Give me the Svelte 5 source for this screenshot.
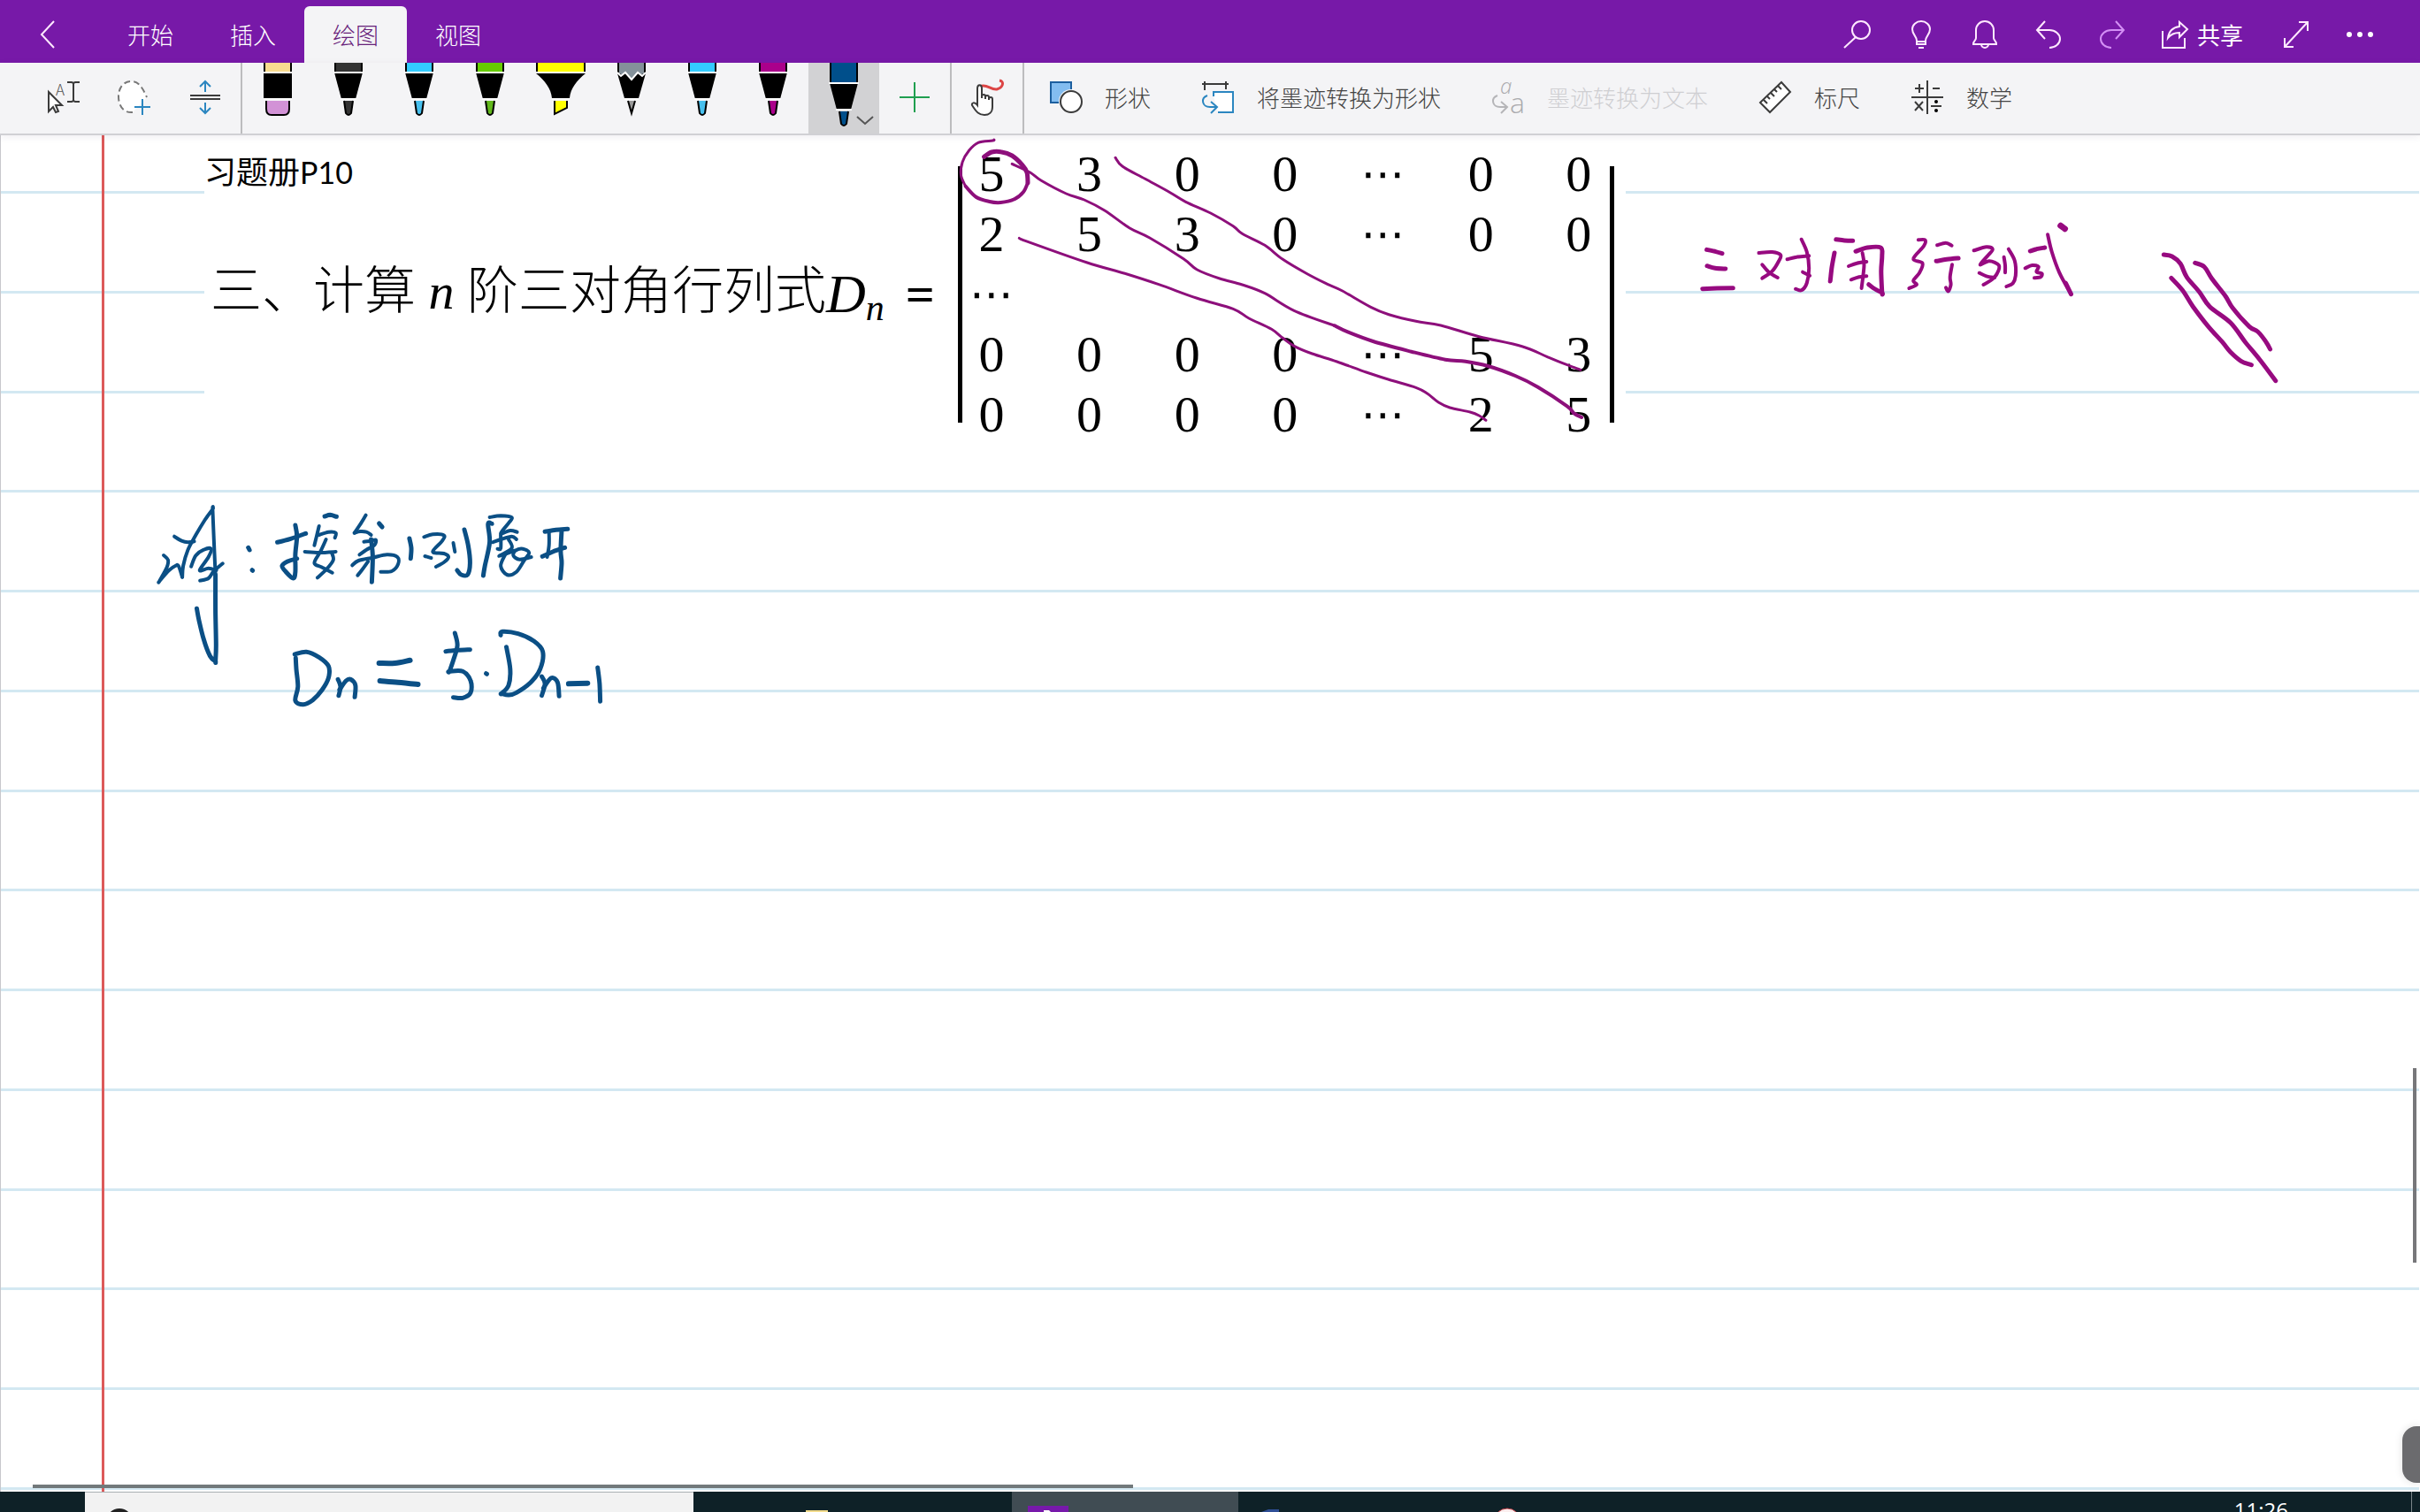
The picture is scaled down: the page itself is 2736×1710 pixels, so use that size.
<script>
  let activeTab = "绘图";
  let activePen = 8;

  const tabs = ["开始", "插入", "绘图", "视图"];

  const pens = [
    { name: "橡皮擦", type: "eraser", barrel: "#f8dc90", tip: "#d292d6" },
    { name: "黑色笔", type: "pen", barrel: "#333333", tip: "#333333" },
    { name: "浅蓝色笔", type: "pen", barrel: "#33ccff", tip: "#47c0ee" },
    { name: "绿色笔", type: "pen", barrel: "#66cc00", tip: "#62b81c" },
    { name: "黄色荧光笔", type: "marker", barrel: "#ffff00", tip: "#ffff00" },
    { name: "铅笔", type: "pencil", barrel: "#84919a", tip: "#999999" },
    { name: "天蓝色笔", type: "pen", barrel: "#33ccff", tip: "#47c0ee" },
    { name: "紫红色笔", type: "pen", barrel: "#ab008b", tip: "#ab008b" },
    { name: "深蓝色笔", type: "pen", barrel: "#004f8b", tip: "#004f8b" },
  ];

  const rows = [
    ["5", "3", "0", "0", "⋯", "0", "0"],
    ["2", "5", "3", "0", "⋯", "0", "0"],
    ["⋯", "", "", "", "", "", ""],
    ["0", "0", "0", "0", "⋯", "5", "3"],
    ["0", "0", "0", "0", "⋯", "2", "5"],
  ];

  // Ruled paper: evenly spaced lines, rounded to whole pixels
  const rules = Array.from({ length: 14 }, (_, i) => Math.round(63 + i * 112.77));

  // Each ink group has its own origin, scale and nib; strokes are [width, points]
  const inks = [
    {
      color: "#8d0f7b",
      nib: 0,
      x: 1060, y: -13, sx: 1 / 1.96, sy: 1 / 3,
      strokes: [
        [3, "125,54 122,57 90,64 70,90 55,130 52,175 62,212"],
        [4, "62,212 85,248 115,264 140,267 170,256 190,232 200,200"],
        [5, "200,200 198,165 188,140 165,108 140,95 120,96 103,112"],
        [3, "394,115 410,145 460,187 515,233 550,265 605,303 655,347 675,373 725,412 765,460 820,510 865,545 897,567 960,622 1000,647 1060,670 1115,684 1200,722 1295,755 1350,790 1390,815 1425,835"],
        [3, "165,136 205,165 230,193 285,237 325,258 370,294 425,353 470,387 545,458 575,495 625,525 675,546 725,575 790,634 880,685"],
        [4, "880,685 910,707 965,738 1050,773 1125,800 1170,806 1220,822 1280,855 1330,893 1395,958 1410,982 1427,996"],
        [3, "181,388 200,400 330,470 415,508 490,545 575,592 655,628 690,660 740,697 765,727 790,754 830,780 885,807 950,843 1000,868 1060,895 1085,915 1110,945 1135,963 1180,978 1200,990 1215,1006"],
      ],
    },
    {
      color: "#970a80",
      nib: 0,
      x: 1880, y: 77, sx: 1 / 2.119, sy: 1 / 3,
      strokes: [
        [5, "105,157 125,163 142,170"],
        [5, "106,212 125,220 150,222"],
        [5, "95,290 130,288 168,287"],
        [4, "230,168 262,165 282,175 278,195 262,230 238,254"],
        [4, "238,208 255,235 275,252"],
        [4, "298,190 320,182 350,178"],
        [4, "332,122 345,165 350,220 345,270 332,295 318,290"],
        [4, "335,233 352,245"],
        [5, "415,122 435,126 455,127"],
        [5, "411,168 405,215 401,264"],
        [5, "462,163 490,150 522,150 525,180 523,230 525,303 525,303 505,288 493,275"],
        [4, "478,168 482,210 476,288"],
        [4, "445,213 465,203 488,198"],
        [4, "451,259 470,250 488,247"],
        [4, "612,124 628,124 625,145 600,188 622,203 615,235 600,262 608,276 590,288"],
        [4, "657,142 678,134 692,143"],
        [5, "655,196 680,190 708,186"],
        [4, "693,208 688,250 690,275 684,298 678,286"],
        [4, "745,160 775,148 790,155 780,175 760,208 782,196 805,210 800,240 785,262 768,276"],
        [4, "758,236 775,247 795,252"],
        [4, "817,182 820,210 820,235"],
        [4, "828,155 843,195 845,245 838,272 823,282"],
        [5, "880,162 895,155 915,150"],
        [4, "868,220 885,210 900,215 895,232 908,238 905,250 890,253"],
        [4, "922,106 932,165 950,235 978,308"],
        [5, "965,270 978,308"],
        [7, "953,76 963,86"],
        [5, "1200,174 1220,180 1240,205 1255,250 1285,300 1310,350 1360,405 1395,470 1430,530 1468,602"],
        [5, "1275,202 1297,215 1315,255 1348,315 1365,355 1405,418 1425,435 1445,470 1455,495"],
        [5, "1218,253 1245,295 1270,350 1305,415 1340,470 1360,505 1385,535 1410,548"],
      ],
    },
    {
      color: "#0b4f85",
      nib: 1,
      x: 150, y: 397, sx: 1 / 2.8, sy: 1 / 3,
      strokes: [
        [3, "132,170 155,185 175,190 195,187"],
        [3, "98,234 112,250 108,275 85,321 85,321 115,285 135,270 145,270 157,308"],
        [3, "157,308 160,270 175,215 200,165 230,112 253,78 253,78 257,180 262,300"],
        [4, "262,300 262,420 264,540 262,594 262,594 245,576 225,520 210,455 203,415"],
        [3, "185,272 200,235 225,215 248,212 240,240 212,285 240,278 265,285"],
        [3, "213,320 240,312 255,290 270,275 285,262"],
        [4, "366,208 370,216"],
        [4, "378,284 380,286"],
        [4, "458,190 500,178 548,160"],
        [4, "515,132 520,170 515,230 515,290 508,312 485,290 473,270 490,255 520,245"],
        [4, "608,102 625,97 645,103"],
        [3, "590,135 582,170 575,200"],
        [3, "590,165 620,155 643,158 640,175"],
        [3, "545,222 590,225 643,222"],
        [3, "612,180 595,220 575,260 600,275 632,293"],
        [3, "630,225 635,250 615,280 585,310"],
        [3, "738,98 720,130 702,158"],
        [3, "702,158 720,153 740,155 755,165"],
        [4, "780,126 790,138"],
        [3, "732,188 755,185 770,182 765,200 740,215 718,232"],
        [4, "755,180 760,240 757,325"],
        [3, "695,268 715,252 760,242 805,232 838,240 840,265 820,288 785,290"],
        [3, "745,255 725,285 712,302"],
        [4, "876,177 882,210 880,245"],
        [3, "922,172 950,163 985,166 980,185 950,222 985,228 1000,240 985,258 960,273"],
        [3, "925,237 945,243"],
        [3, "1015,192 1020,222"],
        [4, "1050,147 1062,200 1068,260 1060,300 1040,300 1027,285"],
        [3, "1130,105 1165,100 1200,106 1190,125 1165,160 1195,150 1217,155"],
        [4, "1137,127 1125,128 1130,190 1115,270 1110,303"],
        [3, "1140,190 1165,180 1200,170 1215,180"],
        [3, "1165,165 1165,210 1155,212"],
        [3, "1190,180 1200,210 1160,237 1210,218"],
        [3, "1180,230 1165,270 1185,300 1215,290 1240,250 1255,225 1235,212 1212,218 1205,235 1225,248 1262,240"],
        [4, "1305,154 1340,148 1377,145"],
        [4, "1297,238 1330,222 1368,208"],
        [3, "1318,155 1318,200 1312,240"],
        [4, "1358,150 1355,220 1358,260 1354,312"],
        [4, "513,570 550,562 590,580 620,610 620,650 600,690 570,725 540,740 515,727 523,680 518,620 516,582"],
        [4, "650,655 658,680 652,710"],
        [4, "655,690 675,660 690,655 705,675 703,715"],
        [5, "780,600 830,600 878,590"],
        [5, "783,660 840,665 903,672"],
        [4, "1020,498 1028,540 1015,590 1003,628 1003,628 1045,628 1070,660 1070,700 1045,718 1015,716"],
        [4, "991,560 1030,556 1068,554"],
        [4, "1119,635 1121,637"],
        [4, "1165,505 1170,493 1220,500 1270,525 1298,560 1290,620 1260,665 1215,700 1190,708 1168,703 1168,703 1190,675 1195,620 1183,545"],
        [4, "1295,645 1305,670 1295,710"],
        [4, "1300,685 1325,650 1345,665 1350,712"],
        [5, "1380,670 1440,668"],
        [4, "1472,615 1478,670 1480,730"],
      ],
    },
  ];

  // Smooth curve through the sampled points
  function inkPath(group, text) {
    const p = text.split(" ").map((pair) => {
      const [x, y] = pair.split(",").map(Number);
      return [group.x + x * group.sx, group.y + y * group.sy];
    });
    let d = `M${p[0][0].toFixed(1)} ${p[0][1].toFixed(1)}`;
    for (let i = 0; i < p.length - 1; i++) {
      const before = p[i - 1] || p[i];
      const a = p[i];
      const b = p[i + 1];
      const after = p[i + 2] || b;
      const c = [
        a[0] + (b[0] - before[0]) / 6,
        a[1] + (b[1] - before[1]) / 6,
        b[0] - (after[0] - a[0]) / 6,
        b[1] - (after[1] - a[1]) / 6,
        b[0],
        b[1],
      ];
      d += "C" + c.map((n) => n.toFixed(1)).join(" ");
    }
    return d;
  }
</script>

<div class="app">
  <header class="titlebar">
    <button class="back" aria-label="返回">
      <svg width="20" height="32" viewBox="0 0 20 32"><path d="M17 1 3 16l14 15" /></svg>
    </button>
    <nav class="tabs">
      {#each tabs as tab}
        <button class="tab" class:active={tab === activeTab} on:click={() => (activeTab = tab)}>{tab}</button>
      {/each}
    </nav>
    <div class="actions">
      <button class="action" aria-label="搜索">
        <svg width="32" height="32" viewBox="0 0 32 32"><circle cx="20" cy="11" r="10" /><path d="M14 19 1 31" /></svg>
      </button>
      <button class="action" aria-label="提示">
        <svg width="24" height="32" viewBox="0 0 24 32"><path d="M7 27v-4C7 18 2 16 2 10a10 9 0 0 1 20 0c0 6-5 8-5 13v4zM7 24h10M9 31h6" /></svg>
      </button>
      <button class="action" aria-label="通知">
        <svg width="30" height="32" viewBox="0 0 30 32"><path d="M5 20V11a10 10 0 0 1 20 0v9c0 3 3 3 3 7H2c0-4 3-4 3-7zM11 27a4 4 0 0 0 8 0" /></svg>
      </button>
      <button class="action" aria-label="撤消">
        <svg width="30" height="32" viewBox="0 0 30 32"><path d="M11 1 2 11l9 10M2 11h14a12 10 0 0 1 0 20" /></svg>
      </button>
      <button class="action faded" aria-label="恢复">
        <svg width="30" height="32" viewBox="0 0 30 32"><path d="m19 1 9 10-9 10M28 11H14a12 10 0 0 0 0 20" /></svg>
      </button>
      <button class="share">
        <svg width="30" height="32" viewBox="0 0 30 32"><path d="M1 12v19h25V20" /><path d="M20 2l9 8-9 9v-5c-6 0-10 2-13 6 1-8 6-12 13-13z" /></svg>
        共享
      </button>
      <button class="action" aria-label="全屏">
        <svg width="30" height="32" viewBox="0 0 30 32"><path d="M2 30 28 2M18 2h10v10M2 20v10h10" /></svg>
      </button>
      <button class="action" aria-label="更多">
        <svg width="30" height="32" viewBox="0 0 30 32"><g class="dots"><circle cx="3" cy="16" r="3" /><circle cx="15" cy="16" r="3" /><circle cx="27" cy="16" r="3" /></g></svg>
      </button>
    </div>
  </header>

  <div class="toolbar">
    <div class="select-tools">
      <button aria-label="选择对象或键入文本">
        <svg width="38" height="38" viewBox="0 0 38 38">
          <path d="M2 13v22l5-5 3 6 3-1-3-7h7z" class="dark white" />
          <path d="M23 2h5l2 1 2-1h5M23 24h5l2-1 2 1h5M30 3v20" class="dark" />
          <text x="10" y="17" font-size="17">A</text>
        </svg>
      </button>
      <button aria-label="套索选择">
        <svg width="38" height="38" viewBox="0 0 38 38">
          <path d="M17 36C6 37 1 28 1 18 1 8 7 1 15 1c9 0 13 7 18 18" class="dark dashed white" />
          <path d="M28 21v18M19 30h18" class="blue" />
        </svg>
      </button>
      <button aria-label="插入或删除空格">
        <svg width="38" height="38" viewBox="0 0 38 38">
          <path d="M2 17h34M2 21h34" class="dark" />
          <path d="M19 13V1M13 7l6-6 6 6M19 25v12M13 31l6 6 6-6" class="blue" />
        </svg>
      </button>
    </div>

    <div class="pens">
      {#each pens as pen, i}
        <button class="pen" class:active={i === activePen} aria-label={pen.name} on:click={() => (activePen = i)}>
          <svg width="80" height="80" viewBox="-40 0 80 80">
            {#if i === activePen}
              <rect x="-16" width="32" height="23" />
              <rect x="-14" width="28" height="22" fill={pen.barrel} />
            {/if}
            <g transform={i === activePen ? "translate(0 12)" : null}>
              {#if pen.type === "marker"}
                <rect x="-28" width="56" height="10" />
                <rect x="-26" width="52" height="10" fill={pen.barrel} />
                <path d="M-28 12h56C18 20 11 29 10 40h-20C-11 29-18 20-28 12z" />
                <path d="M-28 11h56M-10 41h20" class="gap" />
                <path d="M-7 43V58L7 51V43" fill={pen.tip} class="outline" />
              {:else}
                {#if i !== activePen}
                  <rect x="-16" width="32" height="12" />
                  <rect x="-14" width="28" height="12" fill={pen.barrel} />
                {/if}
                {#if pen.type === "eraser"}
                  <path d="M-16 11h32v30h-32z" />
                  <path d="M-16 11h32M-16 41h32" class="gap" />
                  <path d="M-13 43v9q0 7 6 7H7q6 0 6-7v-9" fill={pen.tip} class="outline" />
                {:else if pen.type === "pencil"}
                  <path d="M-16 12h32L8 40H-8z" />
                  <path d="M-14 0h28v11l-3 3-4-3-7 8-7-8-4 3-3-3z" fill={pen.barrel} />
                  <path d="M-16 11l4 4 5-4 7 8 7-8 5 4 4-4M-8 41H8" class="gap" />
                  <path d="M-4 43 0 57l4-14" fill={pen.tip} class="outline" />
                {:else}
                  <path d="M-16 11h32L8 41H-8z" />
                  <path d="M-17 11h34M-9 41H9" class="gap" />
                  <path d="M-5 43l2 14q3 4 6 0l2-14" fill={pen.tip} class="outline" />
                {/if}
              {/if}
            </g>
            {#if i === activePen}
              <path d="M15 61l9 8 9-8" class="chevron" />
            {/if}
          </svg>
        </button>
      {/each}
      <button class="pen add" aria-label="添加笔">
        <svg width="36" height="36" viewBox="0 0 36 36"><path d="M18 1v34M1 18h34" class="green" /></svg>
      </button>
    </div>

    <button class="touch" aria-label="使用鼠标或触摸绘图">
      <svg width="40" height="44" viewBox="0 0 40 44">
        <path d="M12 10c7-4 12 4 19 3C38 11 40 4 34 3" class="red" />
        <path d="M9 31V12a2 3 0 0 1 5 0v11-2a2 2 0 0 1 4 0v3-2a2 2 0 0 1 4 0v3-1a2 2 0 0 1 4 0v9c0 6-4 9-9 9-6 0-9-3-14-11-1-3 3-4 6 0z" class="dark white" />
      </svg>
    </button>

    <div class="commands">
      <button class="command">
        <svg width="36" height="38" viewBox="0 0 36 38">
          <rect x="1" y="2" width="23" height="23" class="shape" />
          <circle cx="24" cy="24" r="14" class="halo" />
          <circle cx="24" cy="24" r="12" class="dark white" />
        </svg>
        形状
      </button>
      <button class="command">
        <svg width="36" height="38" viewBox="0 0 36 38">
          <path d="M0 4h30M3 1v10M27 1v9" class="dark" />
          <path d="M13 18v-5h22v23H18" class="blue white" />
          <path d="M6 17C-2 20 0 30 9 30h8M10 24l7 6-7 7" class="blue" />
        </svg>
        将墨迹转换为形状
      </button>
      <button class="command disabled" disabled>
        <svg width="36" height="38" viewBox="0 0 36 38">
          <path d="M6 17C-2 20 0 30 9 30h8M10 24l7 6-7 7" class="grey" />
          <text x="9" y="15" font-size="24" font-style="italic">a</text>
          <text x="20" y="37" font-size="32">a</text>
        </svg>
        墨迹转换为文本
      </button>
      <button class="command">
        <svg width="36" height="38" viewBox="0 0 36 38">
          <path d="M25 2 35 13 12 36 1 25z" class="dark white" />
          <path d="M5 22l4 4M9 18l3 3M13 14l4 4M17 10l3 3M21 6l4 4" class="dark" />
        </svg>
        标尺
      </button>
      <button class="command">
        <svg width="36" height="38" viewBox="0 0 36 38">
          <path d="M18 0v38M0 19h36M9 4v10M4 9h10M24 9h8M4 24l9 10M13 24 4 34M22 29h12" class="dark" />
          <circle cx="28" cy="24" r="2" /><circle cx="28" cy="34" r="2" />
        </svg>
        数学
      </button>
    </div>
  </div>

  <main class="page">
    <svg class="layer paper" aria-hidden="true">
      {#each rules as y}
        <rect x="0" {y} width="100%" height="3" />
      {/each}
    </svg>

    <section class="note">
      <p class="source">习题册<span>P10</span></p>
      <div class="problem">
        <p class="question">三、计算{" "}<i>n</i>{" "}阶三对角行列式</p>
        <p class="symbol"><i>D<sub>n</sub></i></p>
        <p class="equals">=</p>
        <div class="determinant">
          <span class="bar"></span>
          <div class="cells">
            {#each rows as row}
              {#each row as cell}
                <span class:ellipsis={cell === "⋯"}>{cell}</span>
              {/each}
            {/each}
          </div>
          <span class="bar"></span>
        </div>
      </div>
    </section>

    <div class="margin-line"></div>

    <svg class="layer ink" role="img" aria-label="手写笔记">
      {#each inks as group}
        <g stroke={group.color}>
          {#each group.strokes as [width, points]}
            <path d={inkPath(group, points)} stroke-width={width + group.nib} />
          {/each}
        </g>
      {/each}
    </svg>

    <div class="scroll-x"></div>
    <div class="scroll-y"></div>
    <div class="side-handle"></div>
  </main>

  <footer class="taskbar">
    <div class="search">
      <svg width="30" height="23" viewBox="0 0 30 23"><circle cx="15" cy="33" r="13" /></svg>
    </div>
    <div class="task folder">
      <svg width="28" height="23" viewBox="0 0 28 23"><path d="M1 21h25v4H1z" fill="#f3dc8c" /></svg>
    </div>
    <div class="task current">
      <svg width="48" height="23" viewBox="0 0 48 23"><path d="M0 16h46v8H0z" fill="#7719aa" /><path d="M18 23v-2h6l2 2z" fill="#fff" /></svg>
    </div>
    <div class="task">
      <svg width="24" height="23" viewBox="0 0 24 23"><path d="M0 23 8 20h12v3z" fill="#2f4f96" /></svg>
    </div>
    <div class="task">
      <svg width="32" height="23" viewBox="0 0 32 23"><circle cx="16" cy="34" r="15" fill="#fbeeee" stroke="#b8383f" /></svg>
    </div>
    <time class="clock">11:26</time>
    <span class="show-desktop"></span>
  </footer>
</div>

<style>
  :global(body) {
    margin: 0;
  }
  .app {
    display: flex;
    flex-direction: column;
    height: 100vh;
    overflow: hidden;
    background: #ffffff;
    color: #444444;
    font-family: "Noto Sans CJK SC", sans-serif;
    font-size: 26px;
    line-height: 38px;
  }
  button {
    display: flex;
    align-items: center;
    justify-content: center;
    margin: 0;
    padding: 0;
    border: none;
    background: none;
    color: inherit;
    font: inherit;
    font-weight: 300;
    white-space: nowrap;
    cursor: pointer;
  }
  svg {
    display: block;
    flex: none;
    overflow: visible;
  }
  p {
    margin: 0;
  }

  /* Title bar */
  .titlebar {
    display: flex;
    flex: none;
    height: 64px;
    padding: 7px 32px 0 0;
    background: #7719a8;
    color: #ffffff;
  }
  .titlebar svg {
    fill: none;
    stroke: #ffe9ff;
    stroke-width: 2;
  }
  .titlebar .dots {
    fill: #ffffff;
    stroke: none;
  }
  .back {
    width: 108px;
    margin-right: 4px;
  }
  .tabs {
    display: flex;
  }
  .tab {
    width: 116px;
    border-radius: 6px 6px 0 0;
  }
  .tab.active {
    background: #f4f4f6;
    color: #68217a;
  }
  .actions {
    display: flex;
    margin-left: auto;
  }
  .action {
    width: 72px;
  }
  .faded svg {
    stroke: #d490f5;
  }
  .share {
    gap: 10px;
    padding: 0 24px 0 20px;
    font-weight: 400;
  }

  /* Drawing toolbar */
  .toolbar {
    position: relative;
    z-index: 1;
    display: flex;
    flex: none;
    height: 80px;
    border-bottom: 2px solid #d0d0d4;
    background: #f4f4f6;
    box-shadow: 0 2px 8px rgba(60, 40, 90, 0.08);
  }
  .dark,
  .blue,
  .green,
  .red,
  .grey {
    fill: none;
    stroke: #3b3b3b;
    stroke-width: 2;
  }
  .blue {
    stroke: #2b86c0;
  }
  .green {
    stroke: #1f9f4f;
  }
  .red {
    stroke: #dc4545;
    stroke-width: 3;
  }
  .grey {
    stroke: #b5b5b8;
  }
  .white {
    fill: #ffffff;
  }
  .dashed {
    stroke: #777777;
    stroke-dasharray: 7 4;
  }
  .select-tools {
    display: flex;
    align-items: center;
    gap: 42px;
    padding: 0 21px 2px 53px;
    border-right: 2px solid #bcbcbe;
  }
  .select-tools text {
    fill: #555555;
  }
  .pens {
    display: flex;
  }
  .pen {
    width: 80px;
  }
  .pen.active {
    background: #d2d2d4;
  }
  .pen.add {
    padding-bottom: 2px;
  }
  .gap {
    fill: none;
    stroke: #ffffff;
    stroke-width: 2;
  }
  .outline {
    stroke: #000000;
    stroke-width: 2;
  }
  .chevron {
    fill: none;
    stroke: #555555;
    stroke-width: 2;
  }
  .touch {
    width: 84px;
    padding-bottom: 2px;
    border-right: 2px solid #bcbcbe;
    border-left: 2px solid #bcbcbe;
  }
  .commands {
    display: flex;
    padding-bottom: 2px;
  }
  .command {
    gap: 26px;
    padding: 0 29px;
  }
  .command.disabled {
    color: #cfcfd2;
  }
  .disabled text {
    fill: #ababae;
    font-family: "Open Sans", sans-serif;
  }
  .shape {
    fill: #83bdf0;
    stroke: #1c5f9f;
    stroke-width: 2;
  }
  .halo {
    fill: #f4f4f6;
  }

  /* Note page */
  .page {
    position: relative;
    flex: 1;
    min-height: 0;
    overflow: hidden;
    border-left: 1px solid #c8c8cc;
  }
  .layer {
    position: absolute;
    top: 0;
    left: -1px;
    width: 100%;
    height: 100%;
  }
  .paper {
    fill: #d3e8f2;
  }
  .ink {
    fill: none;
    stroke-linecap: round;
    stroke-linejoin: round;
    pointer-events: none;
  }
  .margin-line {
    position: absolute;
    top: 0;
    bottom: 0;
    left: 114px;
    width: 3px;
    background: #dc5a5a;
  }
  .note {
    position: absolute;
    top: 10px;
    left: 230px;
    width: 1607px;
    background: #ffffff;
    color: #000000;
  }
  .source {
    position: absolute;
    top: 2px;
    left: 0;
    font-size: 36px;
    line-height: 54px;
  }
  .source span {
    font-family: Lato, sans-serif;
    font-size: 34px;
  }
  .problem {
    display: flex;
    align-items: center;
    padding-left: 7px;
    font-family: "Liberation Serif", "Noto Sans CJK SC", serif;
    font-size: 58px;
    line-height: 68px;
  }
  .question {
    padding-bottom: 6px;
    font-weight: 300;
    white-space: pre;
  }
  .symbol {
    padding-bottom: 2px;
    font-size: 62px;
  }
  .symbol sub {
    font-size: 42px;
    line-height: 0;
    vertical-align: -9px;
  }
  .equals {
    margin: 0 26px 0 24px;
    font-weight: 700;
  }
  .determinant {
    display: flex;
  }
  .bar {
    width: 5px;
    margin: 25px 0;
    background: #000000;
  }
  .cells {
    display: grid;
    grid-template-columns: repeat(7, 34px);
    grid-auto-rows: 68px;
    justify-content: space-between;
    width: 698px;
    padding: 0 18px 0 16px;
  }
  .cells span {
    display: flex;
    justify-content: center;
  }
  .cells .ellipsis {
    font-family: "DejaVu Sans", sans-serif;
    font-size: 50px;
  }
  .scroll-x {
    position: absolute;
    bottom: 4px;
    left: 36px;
    width: 1244px;
    height: 4px;
    background: #72797b;
  }
  .scroll-y {
    position: absolute;
    right: 4px;
    bottom: 259px;
    width: 4px;
    height: 220px;
    background: #77777a;
  }
  .side-handle {
    position: absolute;
    right: 0;
    bottom: 10px;
    width: 20px;
    height: 64px;
    border-radius: 16px 0 0 16px;
    background: #6b6b6e;
    box-shadow: 0 0 10px rgba(0, 0, 0, 0.12);
  }

  /* Taskbar, mostly below the edge of the screen */
  .taskbar {
    display: flex;
    flex: none;
    height: 23px;
    padding-left: 96px;
    overflow: hidden;
    background: #0e2127;
    color: #ffffff;
  }
  .search {
    width: 664px;
    height: 22px;
    padding-left: 24px;
    border-top: 1px solid #a9b0b3;
    background: #f2f2f2;
  }
  .search circle {
    fill: none;
    stroke: #222222;
    stroke-width: 4;
  }
  .task {
    width: 236px;
    padding-left: 26px;
  }
  .folder {
    width: 234px;
    padding-left: 126px;
  }
  .current {
    width: 238px;
    padding-left: 18px;
    background: #404c53;
  }
  .clock {
    margin-left: auto;
    padding: 2px 139px 0 0;
    font-family: "Open Sans", sans-serif;
    font-size: 24px;
  }
  .show-desktop {
    width: 9px;
    border-left: 1px solid #7b868a;
  }
</style>
